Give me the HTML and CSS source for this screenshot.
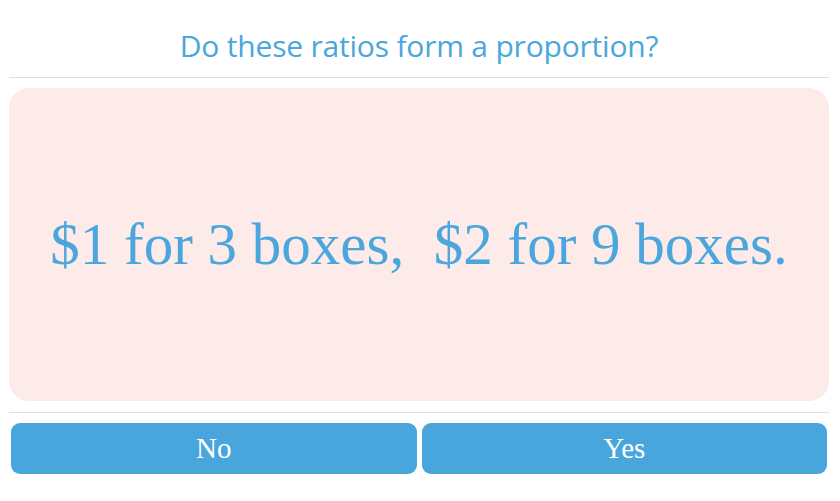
FILE: index.html
```html
<!DOCTYPE html>
<html>
<head>
	<title> Proportion Quiz </title>
	<meta charset="utf-8">
	<link rel="stylesheet" href="styles.css">
</head>
<body>
	<div class="wrap">
		<h1 class="question"> Do these ratios form a proportion? </h1>
		<div class="card">
			<p class="prompt">$1 for 3 boxes,&nbsp; $2 for 9 boxes.</p>
		</div>
		<div class="answers">
			<button class="answer">No</button>
			<button class="answer">Yes</button>
		</div>
	</div>
</body>
</html>
```

FILE: styles.css
```css
*, *:before, *:after { box-sizing:border-box; }

body { margin:0; background-color:#fff; }

.wrap { width:820px; margin-left:9px; }

.question {
	margin:0; height:78px; padding-top:27px;
	font-family:"Open Sans", sans-serif; font-weight:400; font-size:30px; line-height:38px;
	color:#4aa6dc; text-align:center; letter-spacing:-0.2px;
	border-bottom:1px solid #dedede;
}

.card {
	margin-top:10px; height:313px; border-radius:20px; background-color:#fdebe9;
	display:flex; align-items:center; justify-content:center;
}

.prompt { margin:0; font-family:"Liberation Serif", serif; font-size:59px; color:#4aa6dc; }

.answers {
	margin-top:11px; border-top:1px solid #dde0e8;
	display:flex; gap:5px; padding:10px 2px 0 2px;
}

.answer {
	flex:1; height:51px; border:none; border-radius:9px; background-color:#49a6dc;
	color:#fff; font-family:"Liberation Serif", serif; font-size:29px; padding:0;
}
```
